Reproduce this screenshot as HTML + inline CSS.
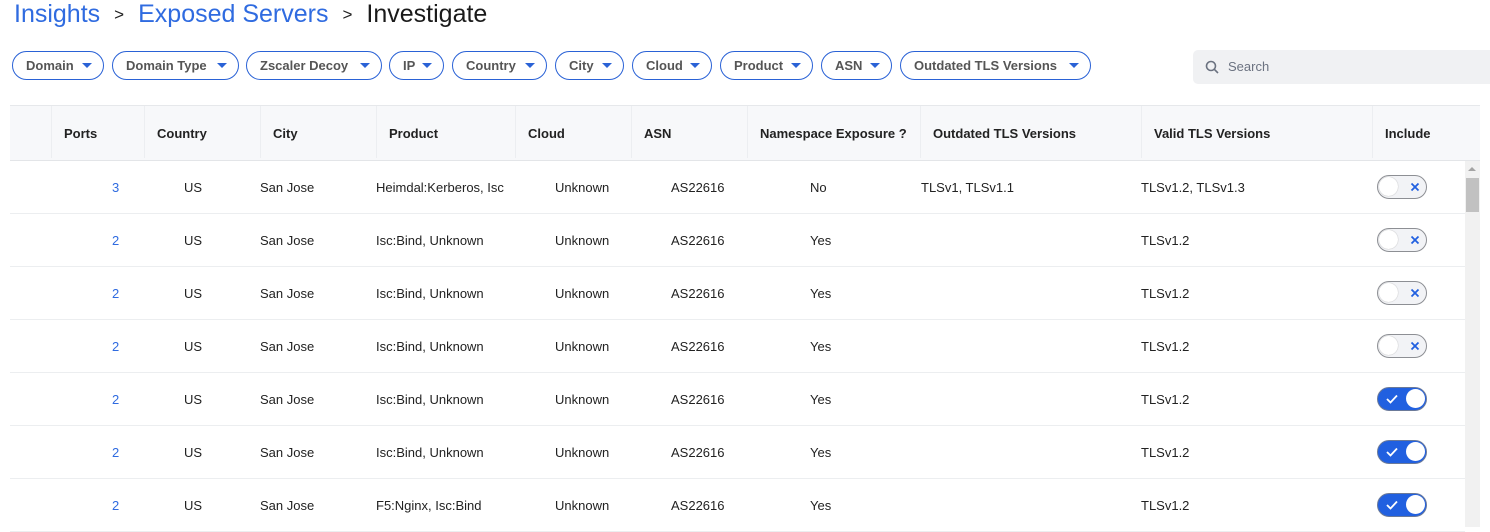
<!DOCTYPE html>
<html><head><meta charset="utf-8"><style>
*{box-sizing:border-box;margin:0;padding:0}
body{width:1490px;height:527px;overflow:hidden;background:#fff;font-family:"Liberation Sans",sans-serif;color:#1a1a1a;position:relative}
.a{position:absolute;white-space:nowrap}
.bc{top:0;left:14px;font-size:25px;line-height:28px}
.bc .l{color:#2f6be0}
.bc .s{color:#222;font-size:17px;margin:0 14px;position:relative;top:-2px}
.pill{position:absolute;top:51px;height:29px;border:1.5px solid #2a62d6;border-radius:15px;font-size:13px;font-weight:bold;color:#555;line-height:28px;padding-left:13px}
.pill:after{content:"";position:absolute;right:11px;top:11px;border-left:5px solid transparent;border-right:5px solid transparent;border-top:5px solid #2a62d6}
.search{position:absolute;left:1193px;top:50px;width:297px;height:34px;background:#f0f1f3;border-radius:5px 0 0 5px}
.hdr{position:absolute;left:10px;top:105px;width:1470px;height:56px;background:#f7f8fa;border-top:1px solid #e6e8eb;border-bottom:1px solid #e3e5e8}
.dv{position:absolute;top:106px;height:52px;width:1px;background:#eceef1}
.h{position:absolute;top:126px;font-size:13px;font-weight:bold;color:#222}
.row{position:absolute;left:10px;width:1455px;height:1px;background:#eceef0}
.c{position:absolute;font-size:13px;color:#222;line-height:16px}
.tg{position:absolute;left:1377px;width:50px;height:24px;border-radius:12px}
.off{background:#f2f3f6;border:1.5px solid #8d8f94}
.off:before{content:"";position:absolute;left:1px;top:1px;width:19px;height:19px;border-radius:50%;background:#fff;box-shadow:0 0 1px #999}
.on{background:#2160e0;border:1.5px solid #6b7a99}
.on:before{content:"";position:absolute;right:1px;top:1px;width:19px;height:19px;border-radius:50%;background:#fff}
.tg svg{position:absolute;top:6px}
</style></head><body>
<div class="a bc"><span class="l">Insights</span><span class="s">&gt;</span><span class="l">Exposed Servers</span><span class="s">&gt;</span><span>Investigate</span></div>

<div class="pill" style="left:12px;width:92px">Domain</div>
<div class="pill" style="left:112px;width:127px">Domain Type</div>
<div class="pill" style="left:246px;width:136px">Zscaler Decoy</div>
<div class="pill" style="left:389px;width:55px">IP</div>
<div class="pill" style="left:452px;width:95px">Country</div>
<div class="pill" style="left:555px;width:69px">City</div>
<div class="pill" style="left:632px;width:80px">Cloud</div>
<div class="pill" style="left:720px;width:93px">Product</div>
<div class="pill" style="left:821px;width:71px">ASN</div>
<div class="pill" style="left:900px;width:191px">Outdated TLS Versions</div>

<div class="search"><svg class="a" style="left:12px;top:10px" width="14" height="14" viewBox="0 0 14 14"><circle cx="6" cy="6" r="4.5" fill="none" stroke="#6b7280" stroke-width="1.6"/><path d="M9.3 9.3L13 13" stroke="#6b7280" stroke-width="1.6"/></svg><span class="a" style="left:35px;top:9px;font-size:13px;color:#6b7280">Search</span></div>

<div class="hdr"></div>
<div class="dv" style="left:51px"></div><div class="dv" style="left:144px"></div><div class="dv" style="left:260px"></div><div class="dv" style="left:376px"></div><div class="dv" style="left:515px"></div><div class="dv" style="left:631px"></div><div class="dv" style="left:747px"></div><div class="dv" style="left:920px"></div><div class="dv" style="left:1141px"></div><div class="dv" style="left:1372px"></div>
<div class="h" style="left:64px">Ports</div>
<div class="h" style="left:157px">Country</div>
<div class="h" style="left:273px">City</div>
<div class="h" style="left:389px">Product</div>
<div class="h" style="left:528px">Cloud</div>
<div class="h" style="left:644px">ASN</div>
<div class="h" style="left:760px">Namespace Exposure ?</div>
<div class="h" style="left:933px">Outdated TLS Versions</div>
<div class="h" style="left:1154px">Valid TLS Versions</div>
<div class="h" style="left:1385px">Include</div>

<div class="a" style="left:1465px;top:161px;width:15px;height:366px;background:#f1f1f1"></div>
<div class="a" style="left:1466px;top:178px;width:13px;height:34px;background:#c1c1c1"></div>
<div class="a" style="left:1468px;top:167px;border-left:4px solid transparent;border-right:4px solid transparent;border-bottom:4px solid #a3a3a3"></div>

<div id="rows"></div>
<script>
var d=[["3","Heimdal:Kerberos, Isc","No","TLSv1, TLSv1.1","TLSv1.2, TLSv1.3",0],
["2","Isc:Bind, Unknown","Yes","","TLSv1.2",0],
["2","Isc:Bind, Unknown","Yes","","TLSv1.2",0],
["2","Isc:Bind, Unknown","Yes","","TLSv1.2",0],
["2","Isc:Bind, Unknown","Yes","","TLSv1.2",1],
["2","Isc:Bind, Unknown","Yes","","TLSv1.2",1],
["2","F5:Nginx, Isc:Bind","Yes","","TLSv1.2",1]];
var h="";
d.forEach(function(r,i){var y=180+i*53;
h+='<div class="row" style="top:'+(213+i*53)+'px"></div>';
h+='<div class="c" style="left:112px;top:'+y+'px;color:#2f6be0">'+r[0]+'</div>';
h+='<div class="c" style="left:184px;top:'+y+'px">US</div>';
h+='<div class="c" style="left:260px;top:'+y+'px">San Jose</div>';
h+='<div class="c" style="left:376px;top:'+y+'px;width:128px;overflow:hidden;white-space:nowrap">'+r[1]+'</div>';
h+='<div class="c" style="left:555px;top:'+y+'px">Unknown</div>';
h+='<div class="c" style="left:671px;top:'+y+'px">AS22616</div>';
h+='<div class="c" style="left:810px;top:'+y+'px">'+r[2]+'</div>';
h+='<div class="c" style="left:921px;top:'+y+'px">'+r[3]+'</div>';
h+='<div class="c" style="left:1141px;top:'+y+'px">'+r[4]+'</div>';
if(r[5])h+='<div class="tg on" style="top:'+(175+i*53)+'px"><svg style="left:8px" width="12" height="10" viewBox="0 0 12 10"><path d="M1 5l3.5 3.5L11 1.5" fill="none" stroke="#fff" stroke-width="1.8"/></svg></div>';
else h+='<div class="tg off" style="top:'+(175+i*53)+'px"><svg style="left:32px;top:6px" width="10" height="10" viewBox="0 0 10 10"><path d="M1.5 1.5l7 7M8.5 1.5l-7 7" stroke="#2160e0" stroke-width="1.8"/></svg></div>';
});
document.getElementById("rows").innerHTML=h;
</script>
</body></html>
